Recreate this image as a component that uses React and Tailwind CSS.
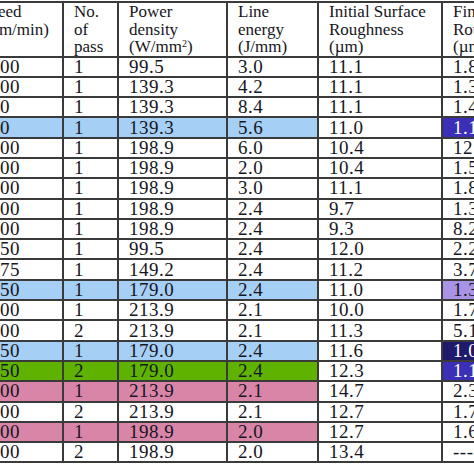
import React from 'react';

const rows = [
  ['1000', '1', '99.5', '3.0', '11.1', '1.85'],
  ['1000', '1', '139.3', '4.2', '11.1', '1.32'],
  ['500', '1', '139.3', '8.4', '11.1', '1.43'],
  ['750', '1', '139.3', '5.6', '11.0', '1.12', 'blue', 'indigo'],
  ['1000', '1', '198.9', '6.0', '10.4', '12.5'],
  ['3000', '1', '198.9', '2.0', '10.4', '1.52'],
  ['2000', '1', '198.9', '3.0', '11.1', '1.85'],
  ['2500', '1', '198.9', '2.4', '9.7', '1.31'],
  ['2500', '1', '198.9', '2.4', '9.3', '8.21'],
  ['1250', '1', '99.5', '2.4', '12.0', '2.23'],
  ['1875', '1', '149.2', '2.4', '11.2', '3.71'],
  ['2250', '1', '179.0', '2.4', '11.0', '1.34', 'blue', 'lilac'],
  ['3000', '1', '213.9', '2.1', '10.0', '1.72'],
  ['3000', '2', '213.9', '2.1', '11.3', '5.12'],
  ['2250', '1', '179.0', '2.4', '11.6', '1.05', 'blue', 'navy'],
  ['2250', '2', '179.0', '2.4', '12.3', '1.13', 'green', 'indigo'],
  ['3000', '1', '213.9', '2.1', '14.7', '2.34', 'pink'],
  ['3000', '2', '213.9', '2.1', '12.7', '1.75'],
  ['3000', '1', '198.9', '2.0', '12.7', '1.64', 'pink'],
  ['3000', '2', '198.9', '2.0', '13.4', '-----'],
];

const rowBg = {
  blue: 'bg-[#a6cff5]',
  green: 'bg-[#5fb300]',
  pink: 'bg-[#d985a8]',
};

const lastBg = {
  indigo: 'bg-[#3b2fb6] text-white',
  navy: 'bg-[#1f1a6b] text-white',
  lilac: 'bg-[#a893e6]',
};

const cell = 'border-2 border-[#3a3a3a] pl-[10px] pr-0 whitespace-nowrap overflow-hidden';

export default function App() {
  return (
    <div className="w-[474px] h-[474px] overflow-hidden bg-white text-[#161622]" style={{ fontFamily: '"Liberation Serif", serif' }}>
      <table className="table-fixed w-[583px] border-collapse ml-[-32px] mt-[1px]">
        <colgroup>
          <col className="w-[94px]" />
          <col className="w-[55px]" />
          <col className="w-[109px]" />
          <col className="w-[91px]" />
          <col className="w-[124px]" />
          <col className="w-[110px]" />
        </colgroup>
        <thead>
          <tr className="h-[52px] text-left text-[17px] leading-[17.5px]">
            <th className={`${cell} font-normal align-top`}>Speed<br />(mm/min)</th>
            <th className={`${cell} font-normal align-top`}>No.<br />of<br />pass</th>
            <th className={`${cell} font-normal align-top`}>Power<br />density<br />(W/mm<sup className="text-[10px] leading-none">2</sup>)</th>
            <th className={`${cell} font-normal align-top`}>Line<br />energy<br />(J/mm)</th>
            <th className={`${cell} font-normal align-top`}>Initial Surface<br />Roughness<br />(µm)</th>
            <th className={`${cell} font-normal align-top`}>Final Surface<br />Roughness<br />(µm)</th>
          </tr>
        </thead>
        <tbody>
          {rows.map((r, i) => (
            <tr key={i} className="h-[20.3px] text-[19px] leading-[16px] tracking-[0.5px]">
              {r.slice(0, 6).map((v, j) => {
                let bg = '';
                if (j < 4 && r[6]) bg = rowBg[r[6]];
                if (j === 5 && r[7]) bg = lastBg[r[7]];
                return (
                  <td key={j} className={`${cell} align-middle ${bg}`}>{v}</td>
                );
              })}
            </tr>
          ))}
        </tbody>
      </table>
    </div>
  );
}
